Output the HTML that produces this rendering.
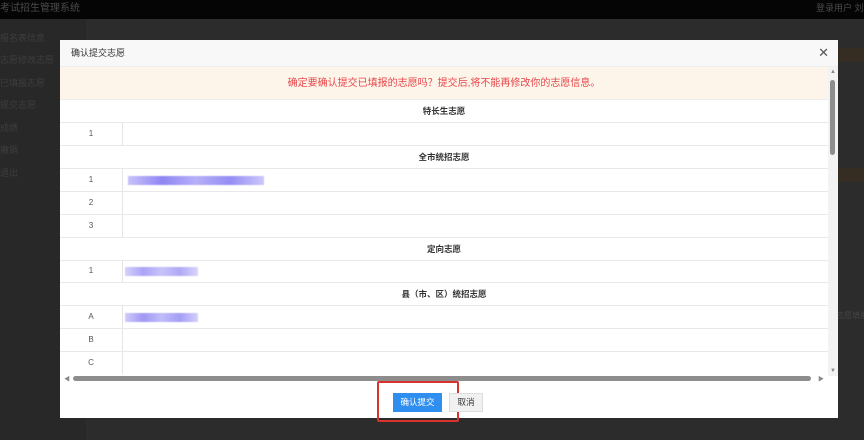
<!DOCTYPE html>
<html><head><meta charset="utf-8"><style>
*{margin:0;padding:0;box-sizing:border-box}
body{width:864px;height:440px;overflow:hidden;background:#2c2c2c;font-family:"Liberation Sans","Noto Sans CJK SC",sans-serif;font-size:9px;color:#333;position:relative}
.top{position:absolute;left:0;top:0;width:864px;height:19px;background:#050505;color:#4a4a4a;font-size:10px;line-height:15px;white-space:nowrap}
.side{position:absolute;left:0;top:19px;width:86px;height:421px;background:#282828}
.side div{position:absolute;left:0;color:#3e3e3e;font-size:9px;white-space:nowrap}
.modal{position:absolute;left:60px;top:40px;width:778px;height:378px;background:#fff}
.hd{height:27px;background:#f8f8f8;border-bottom:1px solid #eee;line-height:26px;padding-left:11px;color:#333;font-size:9px}
.x{position:absolute;right:9px;top:5px;font-size:13px;color:#555}
.warn{position:absolute;left:0;top:27px;width:768px;height:33px;background:#fdf5e9;color:#e8464b;text-align:center;line-height:33px;font-size:10px;border-bottom:1px solid #eee}
.row{position:absolute;left:0;width:768px;height:23px;border-bottom:1px solid #e8e8e8;line-height:22px}
.sec{text-align:center;font-weight:bold;color:#333;font-size:8.5px}
.n{position:absolute;left:0;width:63px;text-align:center;border-right:1px solid #e5e5e5;height:22px;color:#555;font-size:8px}
.blur{position:absolute;top:7px;height:9px;background:linear-gradient(90deg,#c8c3fa,#8f86f3,#b6b0f8,#958df4,#ccc8fb);filter:blur(.6px)}
.vs{position:absolute;left:768px;top:27px;width:10px;height:309px;background:#f3f3f3}
.vt{position:absolute;left:2px;top:13px;width:5px;height:75px;background:#8d8d8d;border-radius:3px}
.hs{position:absolute;left:0;top:334px;width:768px;height:8px;background:#fff}
.ht{position:absolute;left:13px;top:2px;width:738px;height:5px;background:#8d8d8d;border-radius:3px}
.btn1{position:absolute;left:333px;top:353px;width:49px;height:19px;background:#2f8ff0;color:#fff;text-align:center;line-height:19px;font-size:8.5px}
.btn2{position:absolute;left:389px;top:353px;width:34px;height:19px;background:#f1f1f1;border:1px solid #ddd;color:#333;text-align:center;line-height:17px;font-size:8.5px}
.red{position:absolute;left:317px;top:341px;width:82px;height:41px;border:2px solid #d9332f;border-radius:2px}
</style></head><body>
<div class="top"><span style="position:absolute;left:0;top:1px">考试招生管理系统</span><span style="position:absolute;left:816px;top:1px;font-size:9px">登录用户 刘</span></div>
<div class="side">
<div style="top:12px">报名表信息</div><div style="top:34px">志愿修改志愿</div><div style="top:57px">已填报志愿</div><div style="top:79px">提交志愿</div><div style="top:102px">成绩</div><div style="top:124px">撤销</div><div style="top:147px">退出</div>
</div>
<div style="position:absolute;left:838px;top:48px;width:26px;height:14px;background:#352c22"></div>
<div style="position:absolute;left:838px;top:168px;width:26px;height:14px;background:#352c22"></div>
<div style="position:absolute;left:836px;top:310px;color:#444;font-size:8px;white-space:nowrap">志愿填报</div>
<div class="modal">
<div class="hd">确认提交志愿</div><div class="x">✕</div>
<div class="warn">确定要确认提交已填报的志愿吗？提交后,将不能再修改你的志愿信息。</div>
<div class="row sec" style="top:60px">特长生志愿</div>
<div class="row" style="top:83px"><div class="n">1</div></div>
<div class="row sec" style="top:106px">全市统招志愿</div>
<div class="row" style="top:129px"><div class="n">1</div><div class="blur" style="left:68px;width:136px"></div></div>
<div class="row" style="top:152px"><div class="n">2</div></div>
<div class="row" style="top:175px"><div class="n">3</div></div>
<div class="row sec" style="top:198px">定向志愿</div>
<div class="row" style="top:220px"><div class="n">1</div><div class="blur" style="left:65px;width:73px;opacity:.75"></div></div>
<div class="row sec" style="top:243px">县（市、区）统招志愿</div>
<div class="row" style="top:266px"><div class="n">A</div><div class="blur" style="left:65px;width:73px;opacity:.85"></div></div>
<div class="row" style="top:289px"><div class="n">B</div></div>
<div class="row" style="top:312px;border-bottom:none"><div class="n">C</div></div>
<div class="vs"><div class="vt"></div><div style="position:absolute;left:2px;top:2px;font-size:6px;color:#888">▲</div><div style="position:absolute;left:2px;bottom:2px;font-size:6px;color:#888">▼</div></div>
<div class="hs"><div style="position:absolute;left:4px;top:0;font-size:6px;color:#888">◀</div><div class="ht"></div><div style="position:absolute;left:758px;top:0;font-size:6px;color:#888">▶</div></div>
<div class="red"></div>
<div class="btn1">确认提交</div>
<div class="btn2">取消</div>
</div>
</body></html>
